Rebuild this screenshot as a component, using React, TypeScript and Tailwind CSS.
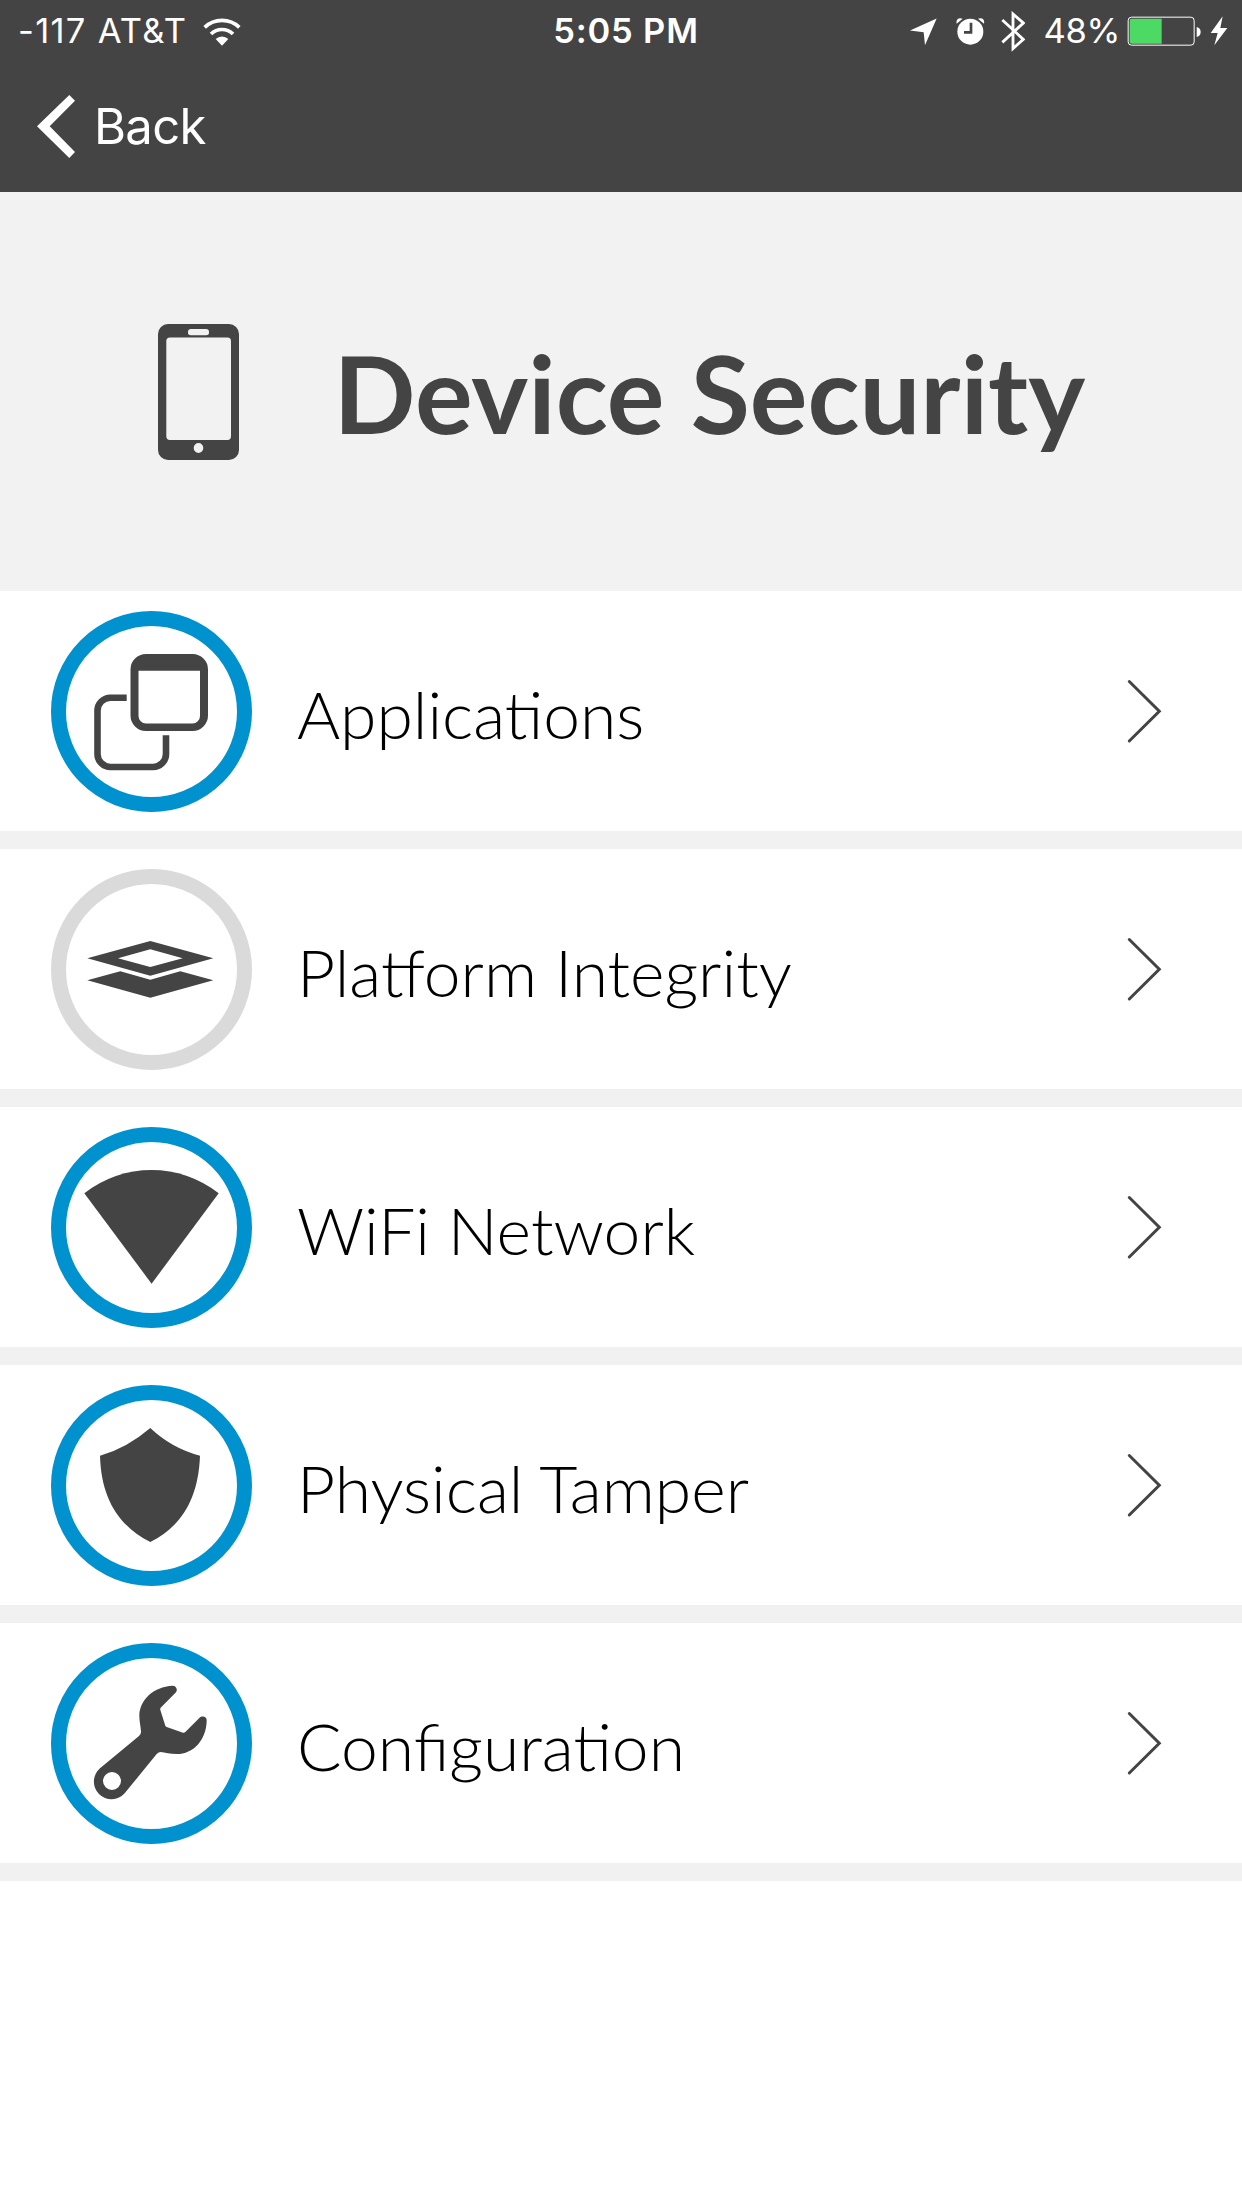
import type { ReactNode } from 'react'

interface SecurityItem {
  label: string
  active: boolean
  icon: ReactNode
}

const ApplicationsIcon = () => (
  <>
    <path
      d="M75.7 86.7H59.5a13 13 0 0 0-13 13V143a13 13 0 0 0 13 13H102a13 13 0 0 0 13-13V124.3"
      fill="none"
      stroke="#444444"
      strokeWidth="6.6"
    />
    <path
      fillRule="evenodd"
      d="M95 43h46.500a15.500 15.500 0 0 1 15.500 15.500v46a15.500 15.500 0 0 1-15.500 15.500H95a15.500 15.500 0 0 1-15.500-15.500v-46A15.500 15.500 0 0 1 95 43zM87.500 59.700V105a7.500 7.500 0 0 0 7.500 7.500h46.500a7.500 7.500 0 0 0 7.500-7.500V59.700z"
    />
  </>
)

const PlatformIcon = () => (
  <>
    <path
      fillRule="evenodd"
      d="M36.300 89.300 99.300 72l63 17.300-63 17.400zM67 89.300l32.300 8.800 32.400-8.800-32.400-9z"
    />
    <path d="M36.300 111.300l33-9 30 8.400 30-8.400 33 9-63 17.400z" />
  </>
)

const WifiNetworkIcon = () => (
  <path d="M33.300 66.300A108.600 108.600 0 0 1 167.700 66.300L100.600 156.700z" />
)

const TamperIcon = () => (
  <path d="M99.300 43Q120.700 63.300 149 70.700C147.300 115 129.700 141.700 99.300 157 69 141.700 50.300 115 49 70.700Q75.700 63.300 99.300 43z" />
)

const WrenchIcon = () => (
  <path
    transform="translate(-21 -23) scale(.33333)"
    fillRule="evenodd"
    d="M428 197C438 197 444 208 438 217L392 263Q390 266 391 270L406 317Q407 320 410 321L459 338Q463 339 466 336L508 294C516 286 531 289 530 302C529 360 490 402 440 402C420 402 405 398 392 396Q386 396 380 402L284 520A52.800 52.800 0 1 1 210 445L327 348Q334 342 333 334C332 318 328 305 328 288C328 240 370 200 428 197ZM273 483A27 27 0 1 0 219 483A27 27 0 1 0 273 483Z"
  />
)

const items: SecurityItem[] = [
  { label: 'Applications', active: true, icon: <ApplicationsIcon /> },
  { label: 'Platform Integrity', active: false, icon: <PlatformIcon /> },
  { label: 'WiFi Network', active: true, icon: <WifiNetworkIcon /> },
  { label: 'Physical Tamper', active: true, icon: <TamperIcon /> },
  { label: 'Configuration', active: true, icon: <WrenchIcon /> }
]

const StatusBar = () => (
  <div className="grid h-[63px] grid-cols-[1fr_auto_1fr] items-center text-[34.5px] leading-none">
    <div className="flex items-center gap-[16px] pl-[18px]">
      <span className="tracking-[1.3px]">-117 AT&amp;T</span>
      <svg className="h-[28px] w-[38px]" viewBox="610 46 114 84" fill="none" stroke="white" strokeWidth="11">
        <path d="M615 74A75 75 0 0 1 719 74" />
        <path d="M634 94A47 47 0 0 1 700 94" />
        <path d="M648 109A27 27 0 0 1 686 109L667 129z" fill="white" stroke="none" />
      </svg>
    </div>
    <span className="pl-[10px] font-semibold tracking-[0.8px]">5:05 PM</span>
    <div className="flex items-center justify-end pr-[14px]">
      <svg className="mr-[19px] size-[27px]" viewBox="88 52.5 81 81" fill="white">
        <path d="M88 90L168 54L133 134L129 95z" />
      </svg>
      <svg className="mr-[16px] size-[29px]" viewBox="227 49 87 87" fill="white">
        <circle cx="270" cy="93" r="39" />
        <path d="M229 69C226 56 235 49 247 54zM311 69C314 56 305 49 293 54z" />
        <path d="M272 66V95H251" fill="none" stroke="#444444" strokeWidth="8" />
      </svg>
      <svg className="mr-[18px] h-[41px] w-[24px]" viewBox="364 31 72 123" fill="none" stroke="white" strokeWidth="8.5">
        <path d="M368 58L431 116L400 144V40L431 67L368 125" />
      </svg>
      <span className="tracking-[-0.3px]">48%</span>
      <svg className="ml-[7px] h-[31px] w-[74px]" viewBox="742 46 222 93" fill="none">
        <rect x="745.5" y="49.500" width="198" height="84" rx="10" stroke="white" strokeWidth="3" />
        <path d="M846 54H756Q750 54 750 60V123Q750 129 756 129H846z" fill="#4cd964" />
        <path d="M951 79Q963 82 963 94Q963 106 951 109z" fill="white" />
      </svg>
      <svg className="ml-[9px] h-[31px] w-[18px]" viewBox="990 45 54 93" fill="white">
        <path d="M1028 46L992 96H1013L1003 133L1042 81H1021z" />
      </svg>
    </div>
  </div>
)

const NavBar = () => (
  <div className="flex h-[127px] items-center pl-[37px]">
    <button className="flex items-center gap-[19px]">
      <svg className="h-[63px] w-[38px]" viewBox="37 95 38 63" fill="white">
        <path d="M37 126.300L69.300 95L75 100.700L49.700 126.300L75 152L69.300 158z" />
      </svg>
      <span className="pb-px text-[49px] leading-none tracking-[-0.7px]">Back</span>
    </button>
  </div>
)

const PageHeader = () => (
  <header className="flex h-[399px] items-center bg-[#f2f2f2] pl-[158px] text-[#444444]">
    <svg className="h-[136px] w-[81px]" viewBox="0 0 81 136" fill="currentColor">
      <path
        fillRule="evenodd"
        d="M10 0H71A10 10 0 0 1 81 10V126A10 10 0 0 1 71 136H10A10 10 0 0 1 0 126V10A10 10 0 0 1 10 0zM33 5A3 3 0 0 0 30 8A3 3 0 0 0 33 11.300H48A3 3 0 0 0 51 8A3 3 0 0 0 48 5zM12 13.500Q8.300 13.500 8.300 17V112Q8.300 116 12 116H69.500Q73 116 73 112V17Q73 13.500 69.500 13.500zM40.500 119A4.800 5 0 1 0 40.500 129A4.800 5 0 1 0 40.500 119z"
      />
    </svg>
    <h1 className="ml-[94.5px] whitespace-nowrap text-[108px] font-bold leading-none">Device Security</h1>
  </header>
)

const SecurityRow = ({ label, active, icon }: SecurityItem) => (
  <li className="flex h-[258px] items-center border-b-[18px] border-[#f1f1f1] bg-white pl-[51px] pr-[79px]">
    <svg className="size-[201px]" viewBox="0 0 201 201" fill="#444444">
      <circle
        cx="100.500"
        cy="100.500"
        r="93"
        fill="none"
        strokeWidth="15"
        className={active ? 'stroke-[#0091cf]' : 'stroke-[#dadada]'}
      />
      {icon}
    </svg>
    <span className="ml-[45px] flex-1 pt-[5px] text-[66px] font-light leading-none text-black">{label}</span>
    <svg className="h-[68px] w-[36px]" viewBox="0 0 36 68" fill="none" stroke="#444444" strokeWidth="3" strokeLinecap="round">
      <path d="M2.300 4.500L32.300 34.200L2.300 64" />
    </svg>
  </li>
)

export default function App() {
  return (
    <div className="min-h-[2208px] w-[1242px] bg-white font-['Lato',sans-serif]">
      <div className="h-[192px] bg-[#444444] font-['Inter',sans-serif] text-white">
        <StatusBar />
        <NavBar />
      </div>
      <PageHeader />
      <ul>
        {items.map((item) => (
          <SecurityRow key={item.label} {...item} />
        ))}
      </ul>
    </div>
  )
}
